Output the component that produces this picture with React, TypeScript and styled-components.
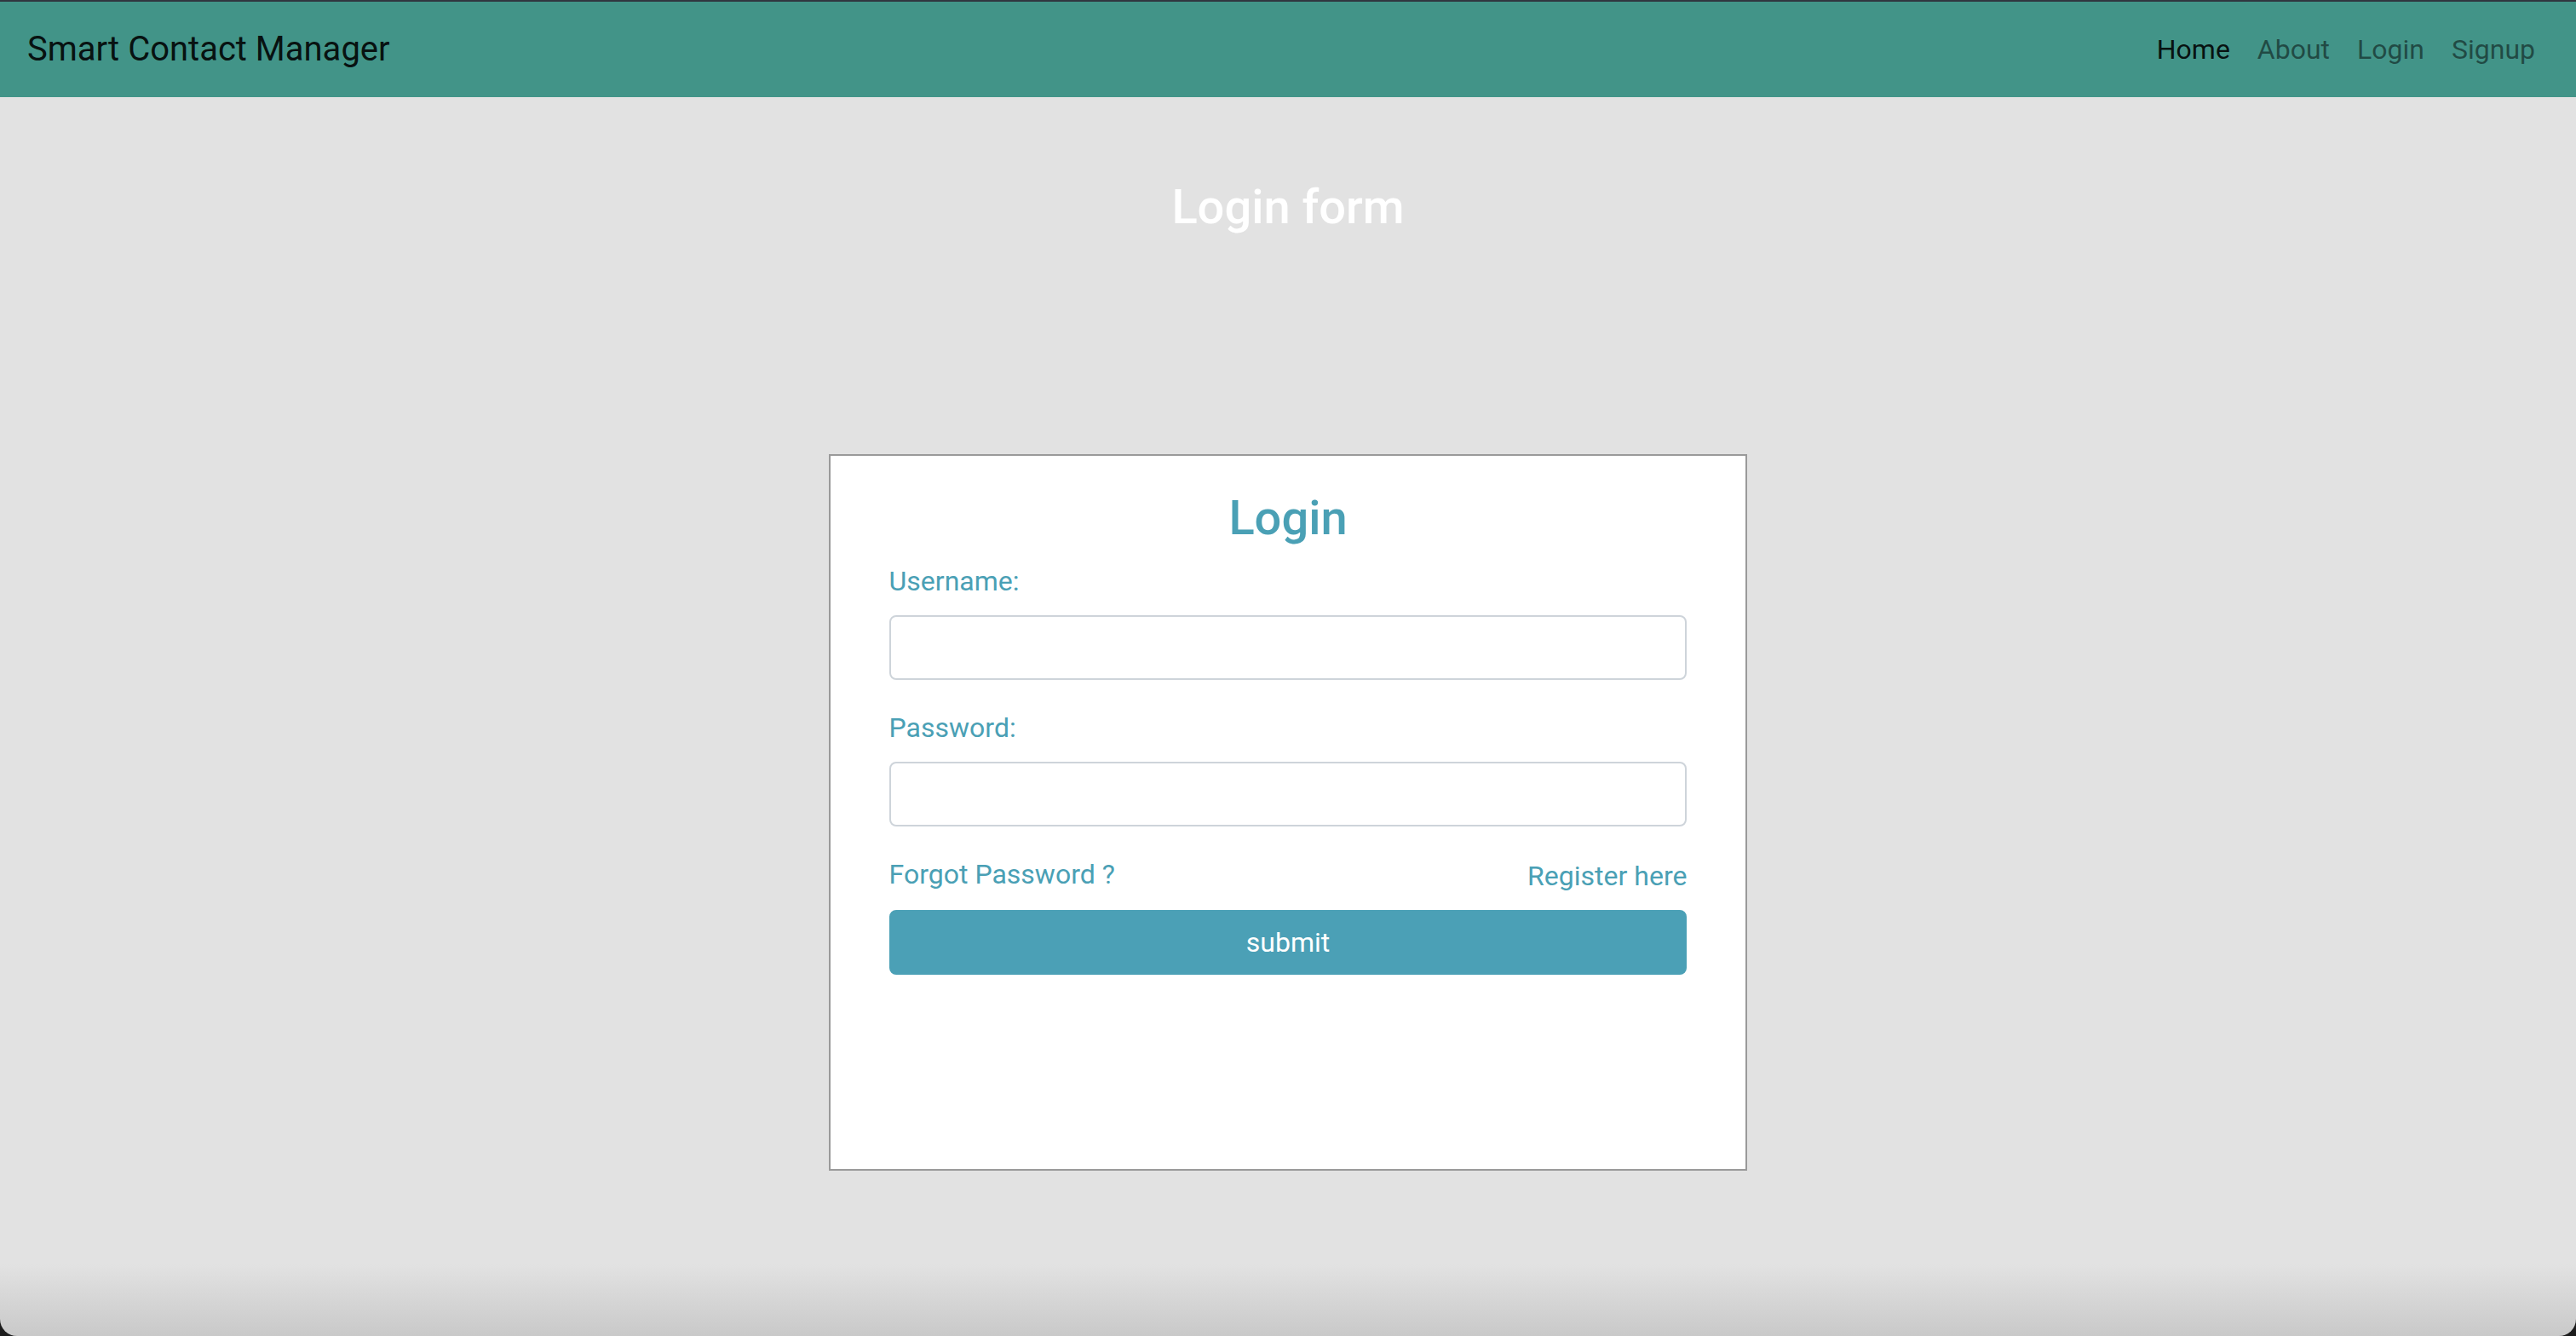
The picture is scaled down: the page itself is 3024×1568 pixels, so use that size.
import React from "react";
import styled, { createGlobalStyle } from "styled-components";

const GlobalStyle = createGlobalStyle`
  html {
    font-size: 32px;
    background: #1c1c1c;
  }
  body {
    margin: 0;
    font-family: Roboto, Inter, "Liberation Sans", sans-serif;
    font-size: 1rem;
    line-height: 1.5;
    color: #212529;
  }
  * {
    box-sizing: border-box;
  }
`;

const Page = styled.div`
  min-height: 100vh;
  display: flex;
  flex-direction: column;
  background: linear-gradient(to bottom, #e2e2e2 0, #e2e2e2 calc(100% - 84px), #c9c9c9 100%);
  border-radius: 0 0 20px 20px;
  overflow: hidden;
`;

const Navbar = styled.nav`
  display: flex;
  align-items: center;
  justify-content: space-between;
  padding: 0.5rem 1rem;
  background: #429488;
  border-top: 2px solid #30363f;
`;

const Brand = styled.a`
  font-size: 1.25rem;
  line-height: 1.5;
  padding: 0.3125rem 0;
  color: rgba(0, 0, 0, 0.9);
  text-decoration: none;
`;

const NavList = styled.ul`
  display: flex;
  list-style: none;
  margin: 0;
  padding: 0;
`;

const NavLink = styled.a<{ $active?: boolean }>`
  display: block;
  padding: 0.5rem;
  color: ${(p) => (p.$active ? "rgba(0, 0, 0, 0.9)" : "rgba(0, 0, 0, 0.5)")};
  text-decoration: none;
`;

const Main = styled.main`
  display: flex;
  flex-direction: column;
  align-items: center;
`;

const PageTitle = styled.h3`
  margin: 3rem 0 8rem;
  font-size: 1.75rem;
  font-weight: 500;
  line-height: 1.2;
  color: #ffffff;
  text-align: center;
`;

const Card = styled.div`
  width: 33.7rem;
  background: #ffffff;
  border: 0.0625rem solid #9a9a9a;
  padding: 1.25rem 2.15rem 7.125rem;
`;

const CardTitle = styled.h3`
  margin: 0 0 0.5rem;
  font-size: 1.75rem;
  font-weight: 500;
  line-height: 1.2;
  color: #4aa0b5;
  text-align: center;
`;

const Field = styled.div`
  margin-bottom: 1rem;
`;

const Label = styled.label`
  display: block;
  margin-bottom: 0.5rem;
  color: #4aa0b5;
`;

const Input = styled.input`
  display: block;
  width: 100%;
  height: calc(1.5em + 0.75rem + 0.125rem);
  padding: 0.375rem 0.75rem;
  font: inherit;
  border: 0.0625rem solid #ced4da;
  border-radius: 0.25rem;
  background: #ffffff;
  outline: none;
`;

const LinkRow = styled.div`
  display: flex;
  justify-content: space-between;
  align-items: flex-start;
  margin-bottom: 0.5rem;
`;

const TextLink = styled.a<{ $shift?: boolean }>`
  color: #4aa0b5;
  text-decoration: none;
  margin-top: ${(p) => (p.$shift ? "0.0625rem" : "0")};
`;

const SubmitButton = styled.button`
  display: block;
  width: 100%;
  padding: 0.375rem 0.75rem;
  font: inherit;
  line-height: 1.5;
  color: #ffffff;
  background: #4ba0b6;
  border: 0.0625rem solid #4ba0b6;
  border-radius: 0.25rem;
  cursor: pointer;
`;

const App = () => {
  return (
    <>
      <GlobalStyle />
      <Page>
        <Navbar>
          <Brand href="#">Smart Contact Manager</Brand>
          <NavList>
            <li>
              <NavLink href="#" $active>
                Home
              </NavLink>
            </li>
            <li>
              <NavLink href="#">About</NavLink>
            </li>
            <li>
              <NavLink href="#">Login</NavLink>
            </li>
            <li>
              <NavLink href="#">Signup</NavLink>
            </li>
          </NavList>
        </Navbar>
        <Main>
          <PageTitle>Login form</PageTitle>
          <Card>
            <CardTitle>Login</CardTitle>
            <form onSubmit={(e) => e.preventDefault()}>
              <Field>
                <Label htmlFor="username">Username:</Label>
                <Input id="username" type="text" />
              </Field>
              <Field>
                <Label htmlFor="password">Password:</Label>
                <Input id="password" type="password" />
              </Field>
              <LinkRow>
                <TextLink href="#">Forgot Password ?</TextLink>
                <TextLink href="#" $shift>
                  Register here
                </TextLink>
              </LinkRow>
              <SubmitButton type="submit">submit</SubmitButton>
            </form>
          </Card>
        </Main>
      </Page>
    </>
  );
};

export default App;
